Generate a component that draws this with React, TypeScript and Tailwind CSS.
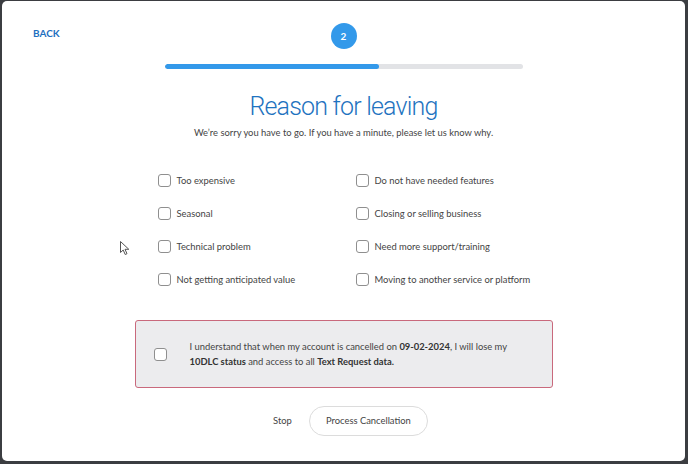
import { useState } from "react";

const reasons: [string, string][] = [
  ["Too expensive", "Do not have needed features"],
  ["Seasonal", "Closing or selling business"],
  ["Technical problem", "Need more support/training"],
  ["Not getting anticipated value", "Moving to another service or platform"],
];

function CheckBox({ checked, onChange }: { checked: boolean; onChange: () => void }) {
  return (
    <button
      type="button"
      onClick={onChange}
      aria-pressed={checked}
      className={`h-[13px] w-[13px] shrink-0 rounded-[3px] border ${
        checked ? "border-[#3399ea] bg-[#3399ea]" : "border-[#8f8f8f] bg-white"
      }`}
    />
  );
}

function Reason({ label }: { label: string }) {
  const [checked, setChecked] = useState(false);
  return (
    <label className="flex h-[13px] cursor-pointer items-center gap-[6px] whitespace-nowrap">
      <CheckBox checked={checked} onChange={() => setChecked(!checked)} />
      <span className="text-[9.4px] leading-[13px] text-[#444]">{label}</span>
    </label>
  );
}

function Cursor() {
  return (
    <svg
      className="pointer-events-none absolute left-[118px] top-[240px]"
      width="11"
      height="15"
      viewBox="0 0 11 15"
    >
      <path
        d="M0.5 0.5 L0.5 11.5 L3.2 9 L5.2 13.5 L7 12.7 L5 8.3 L8.8 8.3 Z"
        fill="white"
        stroke="#555"
        strokeWidth="1"
        strokeLinejoin="round"
      />
    </svg>
  );
}

export default function App() {
  const [agreed, setAgreed] = useState(false);

  return (
    <div className="h-[464px] w-[688px] bg-[#3b3d41] pb-[3px] pl-[2px] pr-[3px] pt-[1px] font-['Lato','Open_Sans',sans-serif]">
      <div className="relative flex h-full flex-col items-center rounded-[5px] bg-white">
        <div className="grid w-full grid-cols-[1fr_auto_1fr] items-start pt-[22px]">
          <a
            href="#"
            className="ml-[31px] mt-[5px] justify-self-start text-[10px] font-bold leading-[10px] text-[#1f6fc0]"
          >
            BACK
          </a>
          <div className="flex h-[26px] w-[26px] items-center justify-center rounded-full bg-[#3399ea] text-[10px] font-bold text-white">
            2
          </div>
          <div />
        </div>

        <div className="mt-[15px] h-[5px] w-[358px] overflow-hidden rounded-full bg-[#e2e3e6]">
          <div className="h-full w-[60%] rounded-full bg-[#3399ea]" />
        </div>

        <h1 className="mt-[23px] font-['Roboto',sans-serif] text-[25px] font-light leading-[30px] tracking-[-0.8px] text-[#1f73c0]">
          Reason for leaving
        </h1>
        <p className="mt-[4px] text-[9.4px] leading-[13px] text-[#444]">
          We’re sorry you have to go. If you have a minute, please let us know why.
        </p>

        <div className="mt-[35px] grid w-[372px] grid-cols-[198px_1fr] gap-y-[20px]">
          {reasons.map(([a, b]) => (
            <div key={a} className="contents">
              <Reason label={a} />
              <Reason label={b} />
            </div>
          ))}
        </div>

        <div className="mt-[34px] flex h-[68px] w-[418px] items-center rounded-[3px] border border-[#c9697c] bg-[#ececee] pl-[18px] pr-[30px]">
          <CheckBox checked={agreed} onChange={() => setAgreed(!agreed)} />
          <p className="ml-[23px] text-[9.4px] leading-[15px] text-[#444]">
            I understand that when my account is cancelled on <b className="text-[#333]">09-02-2024</b>, I will
            lose my <b className="text-[#333]">10DLC status</b> and access to all{" "}
            <b className="text-[#333]">Text Request data.</b>
          </p>
        </div>

        <div className="mt-[18px] flex translate-x-[1px] items-center gap-[5px]">
          <button type="button" className="px-3 text-[9.4px] text-[#444]">
            Stop
          </button>
          <button
            type="button"
            className="h-[30px] w-[119px] rounded-full border border-[#dcdcdc] bg-white text-[9.4px] text-[#444]"
          >
            Process Cancellation
          </button>
        </div>

        <Cursor />
      </div>
    </div>
  );
}
